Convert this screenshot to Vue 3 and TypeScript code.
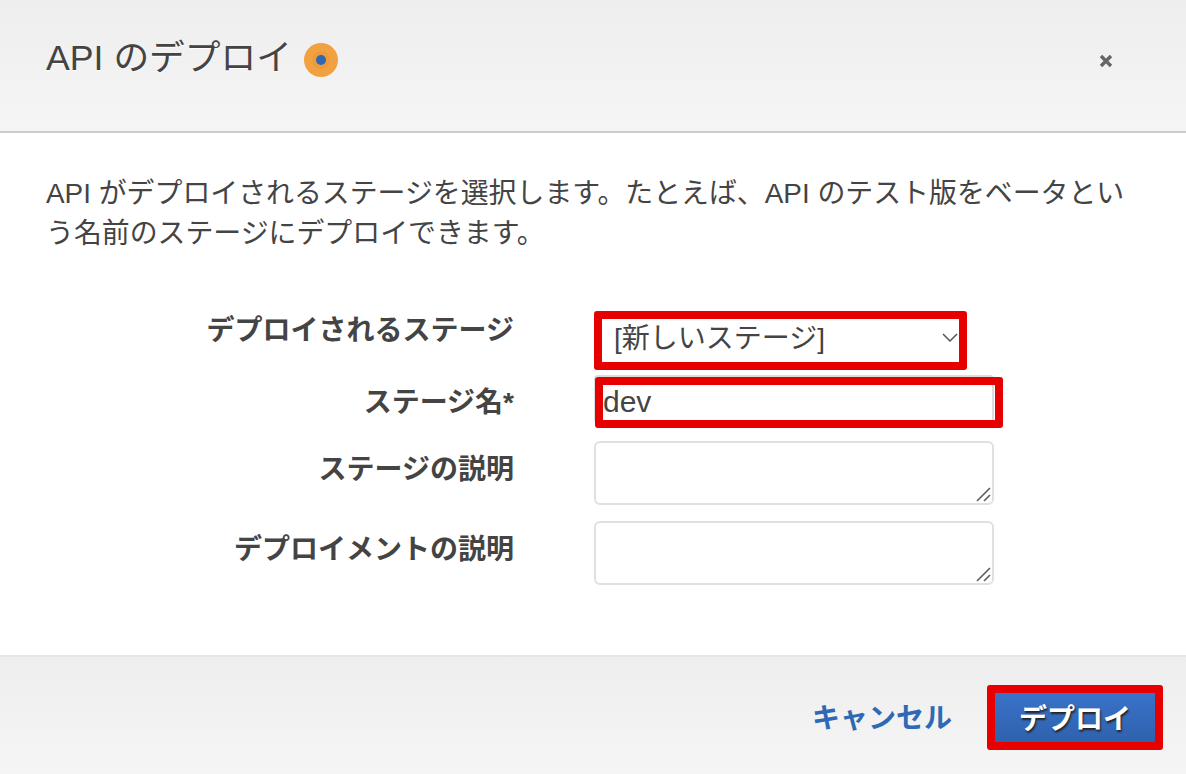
<script setup lang="ts">
interface Row { label: string; kind: 'select' | 'input' | 'textarea'; value?: string }
const rows: Row[] = [
  { label: 'デプロイされるステージ', kind: 'select', value: '[新しいステージ]' },
  { label: 'ステージ名*', kind: 'input', value: 'dev' },
  { label: 'ステージの説明', kind: 'textarea' },
  { label: 'デプロイメントの説明', kind: 'textarea' },
]
</script>

<template>
  <div class="dialog">
    <header class="head">
      <h1 class="title">API のデプロイ</h1>
      <span class="dot"><span class="dot-in"></span></span>
      <svg class="close" width="14" height="14" viewBox="0 0 14 14"><path d="M2 2 12 12M12 2 2 12" stroke="#666" stroke-width="3.4" fill="none" /></svg>
    </header>
    <main class="body">
      <p class="intro">API がデプロイされるステージを選択します。たとえば、API のテスト版をベータという名前のステージにデプロイできます。</p>
      <div class="form">
        <div v-for="r in rows" :key="r.label" class="row" :class="`row-${r.kind}`">
          <label class="label">{{ r.label }}</label>
          <div v-if="r.kind === 'select'" class="select">
            <span>{{ r.value }}</span>
            <svg class="chev" width="16" height="9" viewBox="0 0 16 9"><path d="M1 1 8 8 15 1" stroke="#555" stroke-width="1.5" fill="none" /></svg>
          </div>
          <div v-else-if="r.kind === 'input'" class="input">
            <span>{{ r.value }}</span>
            <span class="mark"></span>
          </div>
          <div v-else class="area">
            <svg class="grip" width="15" height="15" viewBox="0 0 15 15"><path d="M1 14 14 1M8 14 14 8" stroke="#5f5f5f" stroke-width="1.6" fill="none" /></svg>
          </div>
        </div>
      </div>
    </main>
    <footer class="foot">
      <a class="cancel">キャンセル</a>
      <button class="deploy" type="button">デプロイ</button>
    </footer>
  </div>
</template>

<style>
html, body { margin: 0; background: #fff; }
</style>

<style scoped>
.dialog {
  width: 1186px;
  height: 774px;
  display: flex;
  flex-direction: column;
  overflow: hidden;
  background: #fff;
  color: #444;
  font-family: "Liberation Sans", "Noto Sans CJK JP", sans-serif;
}
.head {
  flex: none;
  height: 133px;
  box-sizing: border-box;
  border-bottom: 2px solid #ccc;
  background: linear-gradient(#eee, #f5f5f5);
  display: flex;
  align-items: center;
  padding: 0 73px 12px 46px;
}
.title {
  margin: 0 0 3px;
  font-size: 35.7px;
  font-weight: 400;
  line-height: 40px;
  color: #444;
  text-shadow: 0 1px 1px #fff;
}
.dot {
  width: 34px;
  height: 34px;
  margin-left: 12px;
  border-radius: 50%;
  background: #f1a13f;
  display: flex;
  align-items: center;
  justify-content: center;
}
.dot-in {
  width: 10px;
  height: 10px;
  border-radius: 50%;
  background: #2f67b5;
  box-shadow: 0 0 0 4px #ec9b3c;
}
.close { margin-left: auto; margin-top: 2px; }
.body {
  flex: 1;
  padding: 41px 46px 0;
  box-sizing: border-box;
}
.intro {
  margin: 0;
  width: 1090px;
  font-size: 27.9px;
  line-height: 40px;
  color: #444;
}
.form {
  margin-top: 57px;
  display: flex;
  flex-direction: column;
}
.row {
  display: grid;
  grid-template-columns: 468px 1fr;
  column-gap: 80px;
  align-items: start;
}
.label {
  text-align: right;
  font-size: 28px;
  font-weight: 700;
  line-height: 40px;
  color: #444;
}
.row-select { height: 62px; }
.row-input { height: 68px; }
.row-input .label { padding-top: 10px; }
.row-textarea { height: 80px; }
.row-textarea .label { padding-top: 9px; }
.select {
  width: 373px;
  height: 59px;
  box-sizing: border-box;
  border: 8px solid #e60000;
  border-radius: 3px;
  display: flex;
  align-items: center;
  padding: 0 0 9px 12px;
  font-size: 28px;
  color: #444;
  position: relative;
}
.chev { position: absolute; right: 1px; top: 14px; }
.input {
  position: relative;
  width: 400px;
  height: 48px;
  margin-top: 2px;
  box-sizing: border-box;
  border: 2px solid #ddd;
  border-radius: 4px;
  padding-left: 7px;
  font-size: 30px;
  line-height: 50px;
  color: #444;
}
.mark {
  position: absolute;
  left: -1px;
  top: 0;
  width: 408px;
  height: 51px;
  box-sizing: border-box;
  border: 8px solid #e60000;
  border-radius: 3px;
}
.area {
  position: relative;
  width: 400px;
  height: 64px;
  box-sizing: border-box;
  border: 2px solid #e0e0e0;
  border-radius: 6px;
  background: #fff;
}
.grip { position: absolute; right: 1px; bottom: 1px; }
.foot {
  flex: none;
  height: 119px;
  box-sizing: border-box;
  border-top: 2px solid #e6e6e6;
  background: linear-gradient(#eee, #f5f5f5);
  display: flex;
  align-items: center;
  justify-content: flex-end;
  padding: 0 23px 0 0;
}
.cancel {
  font-size: 28px;
  font-weight: 700;
  color: #2d69b4;
  margin-right: 35px;
}
.deploy {
  width: 176px;
  height: 65px;
  margin-top: 4px;
  box-sizing: border-box;
  border: 8px solid #e60000;
  border-radius: 3px;
  background: linear-gradient(#3a72c9, #2f62ad);
  color: #fff;
  font-family: inherit;
  font-size: 28px;
  font-weight: 700;
  text-shadow: 1px 2px 2px #222;
  padding: 0 0 2px;
}
</style>
